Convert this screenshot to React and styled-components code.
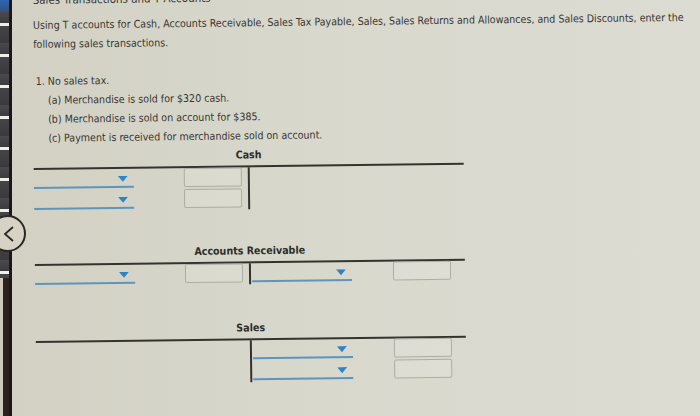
import React from 'react';
import styled, { createGlobalStyle } from 'styled-components';

const GlobalStyle = createGlobalStyle`
  html, body {
    margin: 0;
    padding: 0;
  }
  body {
    width: 700px;
    height: 416px;
    overflow: hidden;
    background: #d6d5ca;
    font-family: "DejaVu Sans Condensed", "DejaVu Sans", sans-serif;
  }
`;

const accounts = [
  { name: 'Cash', left: 2, right: 0, gap: 0 },
  { name: 'Accounts Receivable', left: 1, right: 1, gap: 34 },
  { name: 'Sales', left: 0, right: 2, gap: 36 }
];

const entries = [
  '(a) Merchandise is sold for $320 cash.',
  '(b) Merchandise is sold on account for $385.',
  '(c) Payment is received for merchandise sold on account.'
];

const Caret = () => (
  <svg width="10" height="6" viewBox="0 0 10 6">
    <path d="M0 0 H10 L5 6 Z" fill="#2f84c6" />
  </svg>
);

const EntryRow = ({ side }) => (
  <Row side={side}>
    <Select>
      <Caret />
    </Select>
    <Amount />
  </Row>
);

const TAccountBlock = ({ account }) => (
  <TAccount gap={account.gap}>
    <AccountTitle>{account.name}</AccountTitle>
    <TBody>
      <Side side="left">
        {Array.from({ length: account.left }).map((_, i) => (
          <EntryRow side="left" key={i} />
        ))}
      </Side>
      <Side side="right">
        {Array.from({ length: account.right }).map((_, i) => (
          <EntryRow side="right" key={i} />
        ))}
      </Side>
    </TBody>
  </TAccount>
);

const App = () => {
  return (
    <>
      <GlobalStyle />
      <Frame>
        <Bezel>
          <BlueCap />
          <Ticks />
          <DarkEdge />
        </Bezel>
        <Screen>
          <BackButton>
            <svg width="14" height="16" viewBox="0 0 14 16">
              <polyline points="11,1 3,8 11,15" fill="none" stroke="#2b2724" strokeWidth="1.8" />
            </svg>
          </BackButton>
          <Content>
            <Heading>Sales Transactions and T Accounts</Heading>
            <Intro>
              Using T accounts for Cash, Accounts Receivable, Sales Tax Payable, Sales, Sales Returns and Allowances, and Sales Discounts, enter the
              <br />
              following sales transactions.
            </Intro>
            <Problem>
              <Line>1. No sales tax.</Line>
              {entries.map((text) => (
                <Line indent key={text}>
                  {text}
                </Line>
              ))}
            </Problem>
            {accounts.map((account) => (
              <TAccountBlock account={account} key={account.name} />
            ))}
          </Content>
        </Screen>
      </Frame>
    </>
  );
};

export default App;

const Frame = styled.div`
  display: flex;
  width: 700px;
  height: 416px;
  overflow: hidden;
`;

const Bezel = styled.div`
  display: flex;
  flex-direction: column;
  width: 9px;
  flex-shrink: 0;
  border-right: 3px solid #1c1818;
  background: #2a2424;
`;

const BlueCap = styled.div`
  height: 12px;
  background: linear-gradient(180deg, #2b66b4, #3a4f78);
`;

const Ticks = styled.div`
  height: 266px;
  background: repeating-linear-gradient(
    180deg,
    #4a4a4e 0px,
    #3c3c40 11px,
    #eeeeea 11px,
    #eeeeea 14px,
    #454548 14px,
    #3a3a3e 31px
  );
`;

const DarkEdge = styled.div`
  flex: 1;
  border-left: 3px solid #cfcabb;
  background: #2b2220;
`;

const Screen = styled.div`
  position: relative;
  flex: 1;
  background: linear-gradient(90deg, #d3d1c4 0%, #d8d8cd 45%, #dddcd3 100%);
`;

const BackButton = styled.div`
  position: absolute;
  left: -23px;
  top: 215px;
  width: 33px;
  height: 33px;
  border: 2px solid #2b2724;
  border-radius: 50%;
  background: #d6d3c6;
  display: flex;
  align-items: center;
  justify-content: center;
  z-index: 2;

  svg {
    margin-left: 2px;
  }
`;

const Content = styled.div`
  padding-top: 2px;
  padding-left: 22px;
  color: #363631;
  font-size: 10.6px;
  transform: rotate(-0.7deg);
`;

const Heading = styled.div`
  margin-top: -15px;
  line-height: 19px;
  font-size: 11.5px;
  padding-left: 1px;
`;

const Intro = styled.p`
  margin: 6px 0 0;
  padding-left: 1px;
  line-height: 19px;
  white-space: nowrap;
`;

const Problem = styled.div`
  margin-top: 18px;
  padding-left: 3px;
`;

const Line = styled.div`
  line-height: 19px;
  padding-left: ${(props) => (props.indent ? '12px' : '0')};
`;

const TAccount = styled.div`
  width: 430px;
  margin-top: ${(props) => props.gap}px;
`;

const AccountTitle = styled.div`
  margin-top: 2px;
  margin-bottom: 4px;
  height: 14px;
  line-height: 14px;
  text-align: center;
  font-weight: 700;
  color: #2c2c28;
`;

const TBody = styled.div`
  display: grid;
  grid-template-columns: 216px 214px;
  border-top: 2px solid #34342f;
`;

const Side = styled.div`
  display: flex;
  flex-direction: column;
  gap: 2px;
  padding: 0 0 2px;
  min-height: 19px;
  border-right: ${(props) => (props.side === 'left' ? '2px solid #34322f' : 'none')};
`;

const Row = styled.div`
  display: flex;
  align-items: flex-end;
  justify-content: ${(props) => (props.side === 'left' ? 'space-between' : 'flex-start')};
  gap: 41px;
  height: 19px;
  padding-right: ${(props) => (props.side === 'left' ? '6px' : '0')};
  padding-left: ${(props) => (props.side === 'left' ? '0' : '1px')};
`;

const Select = styled.div`
  width: 100px;
  height: 17px;
  display: flex;
  align-items: center;
  justify-content: flex-end;
  padding-right: 6px;
  box-sizing: border-box;
  border-bottom: 2px solid #5e95bd;
`;

const Amount = styled.div`
  width: 58px;
  height: 19px;
  box-sizing: border-box;
  border: 1px solid #aeada4;
  border-radius: 2px;
  background: rgba(255, 255, 255, 0.12);
`;
